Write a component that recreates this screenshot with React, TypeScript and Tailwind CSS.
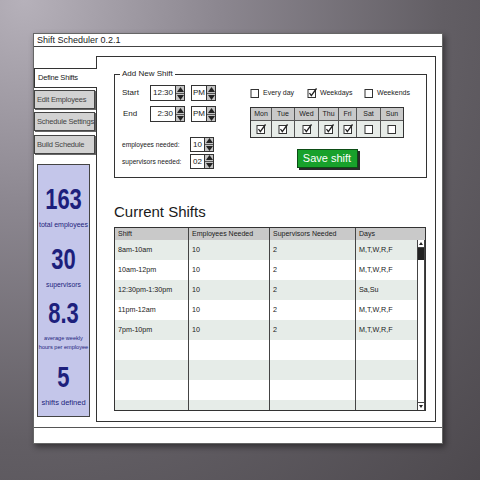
import React from "react";

const SHIFTS = [
  { shift: "8am-10am", emp: "10", sup: "2", days: "M,T,W,R,F" },
  { shift: "10am-12pm", emp: "10", sup: "2", days: "M,T,W,R,F" },
  { shift: "12:30pm-1:30pm", emp: "10", sup: "2", days: "Sa,Su" },
  { shift: "11pm-12am", emp: "10", sup: "2", days: "M,T,W,R,F" },
  { shift: "7pm-10pm", emp: "10", sup: "2", days: "M,T,W,R,F" },
  { shift: "", emp: "", sup: "", days: "" },
  { shift: "", emp: "", sup: "", days: "" },
  { shift: "", emp: "", sup: "", days: "" },
  { shift: "", emp: "", sup: "", days: "" },
];

const DAYS = [
  { d: "Mon", on: true },
  { d: "Tue", on: true },
  { d: "Wed", on: true },
  { d: "Thu", on: true },
  { d: "Fri", on: true },
  { d: "Sat", on: false },
  { d: "Sun", on: false },
];

function Arrows() {
  return (
    <div className="w-[9px] border-l border-[#333] bg-[#c4c4c4] flex flex-col items-center justify-center gap-[1px]">
      <svg width="7" height="5" viewBox="0 0 7 5">
        <path d="M3.5 0 L7 5 L0 5 Z" fill="#222" />
      </svg>
      <div className="w-full h-px bg-[#555]" />
      <svg width="7" height="5" viewBox="0 0 7 5">
        <path d="M0 0 L7 0 L3.5 5 Z" fill="#222" />
      </svg>
    </div>
  );
}

function Spinner({ value, box, right }: { value: string; box: string; right?: boolean }) {
  return (
    <div className="flex h-full border border-[#333] bg-white">
      <div className={`${box} flex items-center px-[2px] text-[8px] ${right ? "justify-end" : "justify-center"}`}>
        {value}
      </div>
      <Arrows />
    </div>
  );
}

function Check({ on }: { on: boolean }) {
  return (
    <svg width="10" height="10" viewBox="0 0 10 10">
      <rect x="1" y="1.5" width="7.5" height="8" fill="white" stroke="#333" strokeWidth="1" />
      {on && <path d="M2.5 5 L4.3 7.6 L9.5 0.5" fill="none" stroke="#222" strokeWidth="1.3" />}
    </svg>
  );
}

function Stat({ n, children, gap }: { n: string; children: React.ReactNode; gap: string }) {
  return (
    <div className={`${gap} flex flex-col items-center`}>
      <div className="h-[26px] text-[22px] leading-[26px] font-bold scale-y-[1.3] origin-bottom">{n}</div>
      {children}
    </div>
  );
}

export default function App() {
  return (
    <div className="w-[480px] h-[480px] overflow-hidden pl-[33px] pt-[33px] bg-[radial-gradient(ellipse_at_5%_0%,#b6b1ba_0%,#8c8790_30%,#625e64_65%,#4d494e_100%)] font-['Liberation_Sans',Arial,sans-serif] text-[#1a1a1a]">
      <div className="w-[410px] h-[411px] bg-white border border-[#666] flex flex-col shadow-[2px_3px_6px_rgba(0,0,0,0.45)]">
        {/* title bar */}
        <div className="h-[13px] border-b border-[#444] px-[3px] text-[9px] leading-[13px]">
          Shift Scheduler 0.2.1
        </div>

        {/* body */}
        <div className="h-[380px] flex pt-[9px]">
          {/* tabs + stats */}
          <div className="w-[62px] relative z-10 pt-[12px] flex flex-col text-[7.5px] tracking-[-0.2px] whitespace-nowrap">
            <div className="w-[63px] h-[20px] bg-white border-y border-l border-[#333] pl-[3px] flex items-center">
              Define Shifts
            </div>
            <div className="mt-[2px] w-[61px] h-[19px] bg-[#d2d2d2] border border-[#444] shadow-[1px_1px_0_#666] pl-[2px] text-[#444] flex items-center">
              Edit Employees
            </div>
            <div className="mt-[3px] w-[61px] h-[19px] bg-[#d2d2d2] border border-[#444] shadow-[1px_1px_0_#666] pl-[2px] text-[#444] flex items-center overflow-hidden">
              Schedule Settings
            </div>
            <div className="mt-[4px] w-[61px] h-[19px] bg-[#d2d2d2] border border-[#444] shadow-[1px_1px_0_#666] pl-[2px] text-[#444] flex items-center">
              Build Schedule
            </div>

            <div className="mt-[10px] ml-[3px] w-[53px] h-[253px] bg-[#c4c6ea] border border-[#444] flex flex-col items-center text-[#1d1f7c] text-center tracking-normal">
              <Stat n="163" gap="mt-[26px]">
                <div className="mt-[3px] text-[7px] leading-[9px]">total employees</div>
              </Stat>
              <Stat n="30" gap="mt-[22px]">
                <div className="mt-[3px] text-[6.8px] leading-[9px]">supervisors</div>
              </Stat>
              <Stat n="8.3" gap="mt-[16px]">
                <div className="mt-[3px] text-[5.6px] leading-[9px]">
                  average weekly
                  <br />
                  hours per employee
                </div>
              </Stat>
              <Stat n="5" gap="mt-[17px]">
                <div className="mt-[3px] text-[7.5px] leading-[9px]">shifts defined</div>
              </Stat>
            </div>
          </div>

          {/* main panel */}
          <div className="w-[340px] h-[366px] border border-[#333] pl-[17px] pt-[17px]">
            {/* add new shift */}
            <div className="relative w-[313px] h-[104px] border border-[#333] flex">
              <div className="absolute -top-[7px] left-[5px] bg-white px-[2px] text-[8px] leading-[12px]">
                Add New Shift
              </div>

              <div className="w-[135px] pl-[7px] pt-[10px] flex flex-col">
                <div className="h-[16px] flex items-center">
                  <div className="w-[28px] text-[8px]">Start</div>
                  <Spinner value="12:30" box="w-[24px]" />
                  <div className="ml-[6px] h-full">
                    <Spinner value="PM" box="w-[14px]" />
                  </div>
                </div>
                <div className="mt-[5px] h-[16px] flex items-center">
                  <div className="w-[28px] pl-px text-[8px]">End</div>
                  <Spinner value="2:30" box="w-[24px]" right />
                  <div className="ml-[6px] h-full">
                    <Spinner value="PM" box="w-[14px]" />
                  </div>
                </div>
                <div className="mt-[15px] h-[15px] flex items-center">
                  <div className="w-[68px] text-[6.6px] whitespace-nowrap">employees needed:</div>
                  <Spinner value="10" box="w-[13px]" />
                </div>
                <div className="mt-[2px] h-[15px] flex items-center">
                  <div className="w-[68px] text-[6.6px] whitespace-nowrap">supervisors needed:</div>
                  <Spinner value="02" box="w-[13px]" />
                </div>
              </div>

              <div className="pt-[13px] flex flex-col">
                <div className="h-[10px] flex items-center text-[7px]">
                  <div className="w-[57px] flex items-center gap-[3px]">
                    <Check on={false} />
                    Every day
                  </div>
                  <div className="w-[57px] flex items-center gap-[3px]">
                    <Check on />
                    Weekdays
                  </div>
                  <div className="flex items-center gap-[3px]">
                    <Check on={false} />
                    Weekends
                  </div>
                </div>

                <div className="mt-[9px] w-[154px] border border-[#333] grid grid-cols-[21px_23px_24px_20px_18px_24px_22px]">
                  {DAYS.map((x, i) => (
                    <div
                      key={x.d}
                      className={`h-[13px] bg-[#c9c9c9] border-b border-[#555] flex items-center justify-center text-[7px] ${i < 6 ? "border-r" : ""}`}
                    >
                      {x.d}
                    </div>
                  ))}
                  {DAYS.map((x, i) => (
                    <div
                      key={x.d + "c"}
                      className={`h-[16px] bg-[#e7ece8] border-[#555] flex items-center justify-center ${i < 6 ? "border-r" : ""}`}
                    >
                      <Check on={x.on} />
                    </div>
                  ))}
                </div>

                <div className="mt-[11px] w-[154px] flex justify-center">
                  <div className="w-[61px] h-[19px] bg-[#18a12b] border border-[#0c4c15] shadow-[2px_2px_0_#2a2a2a] text-white text-[11px] flex items-center justify-center">
                    Save shift
                  </div>
                </div>
              </div>
            </div>

            {/* current shifts */}
            <div className="mt-[24px] text-[15px] leading-[20px]">Current Shifts</div>

            <div className="mt-[5px] w-[312px] h-[184px] border border-[#333] flex flex-col">
              <div className="h-[12px] bg-[#c9c9c9] flex text-[7px] leading-[12px]">
                <div className="w-[74px] border-r border-[#444] pl-[3px]">Shift</div>
                <div className="w-[81px] border-r border-[#444] pl-[3px]">Employees Needed</div>
                <div className="w-[86px] border-r border-[#444] pl-[3px]">Supervisors Needed</div>
                <div className="pl-[3px]">Days</div>
              </div>
              <div className="flex-1 flex overflow-hidden">
                <div className="w-[303px] overflow-hidden">
                  {SHIFTS.map((r, i) => (
                    <div
                      key={i}
                      className={`h-[20px] flex text-[7.2px] leading-[20px] ${i % 2 === 0 ? "bg-[#e6ece8]" : "bg-white"}`}
                    >
                      <div className="w-[74px] h-full border-r border-[#444] pl-[3px]">{r.shift}</div>
                      <div className="w-[81px] h-full border-r border-[#444] pl-[3px]">{r.emp}</div>
                      <div className="w-[86px] h-full border-r border-[#444] pl-[3px]">{r.sup}</div>
                      <div className="flex-1 h-full pl-[3px]">{r.days}</div>
                    </div>
                  ))}
                </div>
                {/* scrollbar */}
                <div className="w-[8px] border-x border-[#444] bg-white flex flex-col">
                  <div className="h-[8px] border-b border-[#444] flex items-center justify-center">
                    <svg width="4" height="3" viewBox="0 0 4 3">
                      <path d="M2 0 L4 3 L0 3 Z" fill="#222" />
                    </svg>
                  </div>
                  <div className="h-[12px] bg-[#222]" />
                  <div className="flex-1" />
                  <div className="h-[8px] border-t border-[#444] flex items-center justify-center">
                    <svg width="4" height="3" viewBox="0 0 4 3">
                      <path d="M0 0 L4 0 L2 3 Z" fill="#222" />
                    </svg>
                  </div>
                </div>
              </div>
            </div>
          </div>
        </div>

        {/* status bar */}
        <div className="flex-1 border-t border-[#555]" />
      </div>
    </div>
  );
}
